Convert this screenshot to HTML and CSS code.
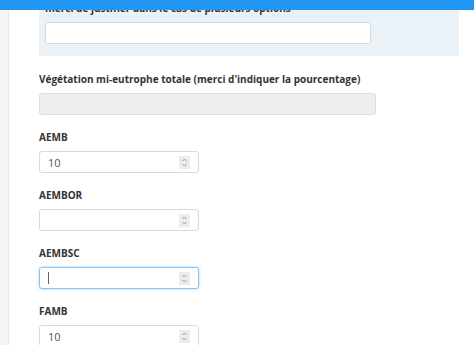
FILE: index.html
```html
<!DOCTYPE html>
<html lang="fr">
<head>
    <meta charset="UTF-8">
    <meta name="viewport" content="width=device-width, initial-scale=1.0">
    <title>Relevé de végétation</title>
    <link rel="stylesheet" href="styles.css">
</head>
<body>
    <div class="topbar"></div>

    <div class="layout">
        <aside class="sidebar"></aside>

        <main class="content">
            <div class="panel">
                <label class="label">merci de justifier dans le cas de plusieurs options</label>
                <input class="field field-wide" type="text">
            </div>

            <div class="group">
                <label class="label">Végétation mi-eutrophe totale (merci d'indiquer la pourcentage)</label>
                <input class="field field-disabled" type="text" disabled>
            </div>

            <div class="group">
                <label class="label">AEMB</label>
                <div class="number">
                    <input class="number-input" type="text" value="10">
                    <span class="spin"><svg width="11" height="13" viewBox="0 0 11 13"><path d="M3.5 5 L5.5 3 L7.5 5 M3.5 8 L5.5 10 L7.5 8" fill="none" stroke="#9a9a9a" stroke-width="1"/></svg></span>
                </div>
            </div>

            <div class="group">
                <label class="label">AEMBOR</label>
                <div class="number">
                    <input class="number-input" type="text" value="">
                    <span class="spin"><svg width="11" height="13" viewBox="0 0 11 13"><path d="M3.5 5 L5.5 3 L7.5 5 M3.5 8 L5.5 10 L7.5 8" fill="none" stroke="#9a9a9a" stroke-width="1"/></svg></span>
                </div>
            </div>

            <div class="group">
                <label class="label">AEMBSC</label>
                <div class="number focused">
                    <span class="caret"></span>
                    <input class="number-input" type="text" value="">
                    <span class="spin"><svg width="11" height="13" viewBox="0 0 11 13"><path d="M3.5 5 L5.5 3 L7.5 5 M3.5 8 L5.5 10 L7.5 8" fill="none" stroke="#9a9a9a" stroke-width="1"/></svg></span>
                </div>
            </div>

            <div class="group">
                <label class="label">FAMB</label>
                <div class="number">
                    <input class="number-input" type="text" value="10">
                    <span class="spin"><svg width="11" height="13" viewBox="0 0 11 13"><path d="M3.5 5 L5.5 3 L7.5 5 M3.5 8 L5.5 10 L7.5 8" fill="none" stroke="#9a9a9a" stroke-width="1"/></svg></span>
                </div>
            </div>
        </main>
    </div>
</body>
</html>
```

FILE: styles.css
```css
body {
    margin: 0;
    background-color: white;
    font-family: 'Open Sans', sans-serif;
    font-size: 10px;
    color: #333;
    overflow: hidden;
}

.topbar {
    position: fixed;
    top: 0;
    left: 0;
    width: 100%;
    height: 10px;
    background-color: #2196f3;
    z-index: 10;
}

.layout {
    display: flex;
    min-height: 100vh;
}

.sidebar {
    width: 8px;
    background-color: #f4f4f4;
    border-right: 1px solid #e9e9e9;
}

.content {
    flex: 1;
    padding: 0 15px 0 30px;
}

.panel {
    background-color: #eaf2f8;
    padding: 0 6px 12px 6px;
    margin-bottom: 15px;
    display: flex;
    flex-direction: column;
}

.label {
    display: block;
    font-weight: 700;
    font-size: 10px;
    line-height: 17px;
    margin-bottom: 5px;
    color: #333;
}

.group {
    margin-bottom: 14px;
}

.field {
    box-sizing: border-box;
    display: block;
    height: 22px;
    border: 1px solid #d9d9d9;
    border-radius: 3px;
    background-color: white;
    margin: 0;
    padding: 0 8px;
}

.field-wide {
    width: 326px;
}

.field-disabled {
    width: 337px;
    background-color: #eeeeee;
    border-color: #dcdcdc;
}

.number {
    box-sizing: border-box;
    display: flex;
    align-items: center;
    width: 160px;
    height: 22px;
    border: 1px solid #d9d9d9;
    border-radius: 3px;
    background-color: white;
    padding: 0 8px 0 8px;
}

.number.focused {
    border-color: #8cc4f0;
    box-shadow: 0 0 3px rgba(102, 175, 233, 0.6);
}

.number-input {
    flex: 1;
    min-width: 0;
    border: none;
    outline: none;
    padding: 0;
    margin: 0;
    background: transparent;
    font-family: 'Open Sans', sans-serif;
    font-size: 11px;
    color: #555;
}

.caret {
    width: 1px;
    height: 12px;
    background-color: #666;
}

.spin {
    display: flex;
    width: 11px;
    height: 13px;
    background-color: #ececec;
}
```
